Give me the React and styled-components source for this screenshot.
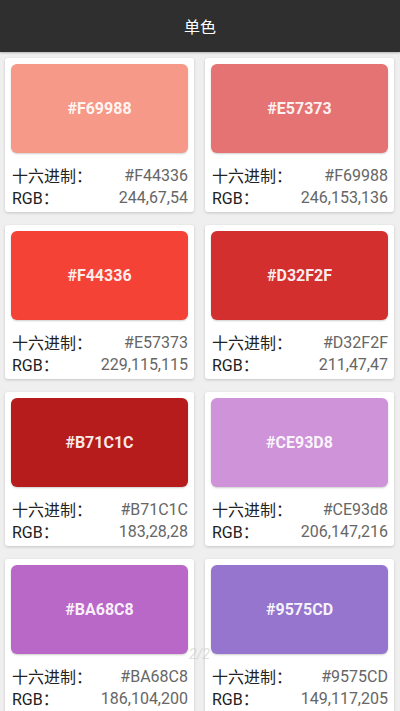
import styled, { createGlobalStyle } from "styled-components";

const GlobalStyle = createGlobalStyle`
  html, body {
    margin: 0;
    padding: 0;
    background: #efefef;
    font-family: Roboto, "Noto Sans CJK SC", sans-serif;
  }
`;

const Page = styled.div`
  position: relative;
  width: 400px;
  height: 711px;
  overflow: hidden;
  background: #efefef;
`;

const Header = styled.header`
  height: 52px;
  background: #2f2f2f;
  color: #fff;
  display: flex;
  align-items: center;
  justify-content: center;
  font-size: 16px;
  box-shadow: 0 1px 2px rgba(0, 0, 0, 0.25);
`;

const Grid = styled.div`
  display: grid;
  grid-template-columns: 189px 189px;
  column-gap: 11px;
  row-gap: 13px;
  padding: 6px 6px 0 5px;
`;

const Card = styled.div`
  background: #fff;
  border-radius: 3px;
  box-shadow: 0 1px 3px rgba(0, 0, 0, 0.18);
  padding: 6px 6px 4px 6px;
  display: flex;
  flex-direction: column;
`;

const Swatch = styled.div`
  height: 89px;
  border-radius: 6px;
  background: ${(p) => p.$color};
  box-shadow: 0 1px 2px rgba(0, 0, 0, 0.2);
  display: flex;
  align-items: center;
  justify-content: center;
  color: rgba(255, 255, 255, 0.92);
  font-weight: bold;
  font-size: 16px;
  margin-bottom: 11px;
`;

const Row = styled.div`
  display: flex;
  justify-content: space-between;
  align-items: center;
  height: 22px;
  font-size: 16px;
`;

const Label = styled.span`
  color: #222;
  padding-left: 1px;
`;

const Value = styled.span`
  color: #666;
`;

const PageMark = styled.div`
  position: absolute;
  left: 189px;
  top: 646px;
  color: rgba(200, 200, 200, 0.6);
  font-size: 14px;
  font-style: italic;
`;

const colors = [
  { swatch: "#F69988", hex: "#F44336", rgb: "244,67,54" },
  { swatch: "#E57373", hex: "#F69988", rgb: "246,153,136" },
  { swatch: "#F44336", hex: "#E57373", rgb: "229,115,115" },
  { swatch: "#D32F2F", hex: "#D32F2F", rgb: "211,47,47" },
  { swatch: "#B71C1C", hex: "#B71C1C", rgb: "183,28,28" },
  { swatch: "#CE93D8", hex: "#CE93d8", rgb: "206,147,216" },
  { swatch: "#BA68C8", hex: "#BA68C8", rgb: "186,104,200" },
  { swatch: "#9575CD", hex: "#9575CD", rgb: "149,117,205" },
];

const App = () => {
  return (
    <Page>
      <GlobalStyle />
      <Header>单色</Header>
      <Grid>
        {colors.map((c) => (
          <Card key={c.swatch}>
            <Swatch $color={c.swatch}>{c.swatch}</Swatch>
            <Row>
              <Label>十六进制：</Label>
              <Value>{c.hex}</Value>
            </Row>
            <Row>
              <Label>RGB：</Label>
              <Value>{c.rgb}</Value>
            </Row>
          </Card>
        ))}
      </Grid>
      <PageMark>2/2</PageMark>
    </Page>
  );
};

export default App;
